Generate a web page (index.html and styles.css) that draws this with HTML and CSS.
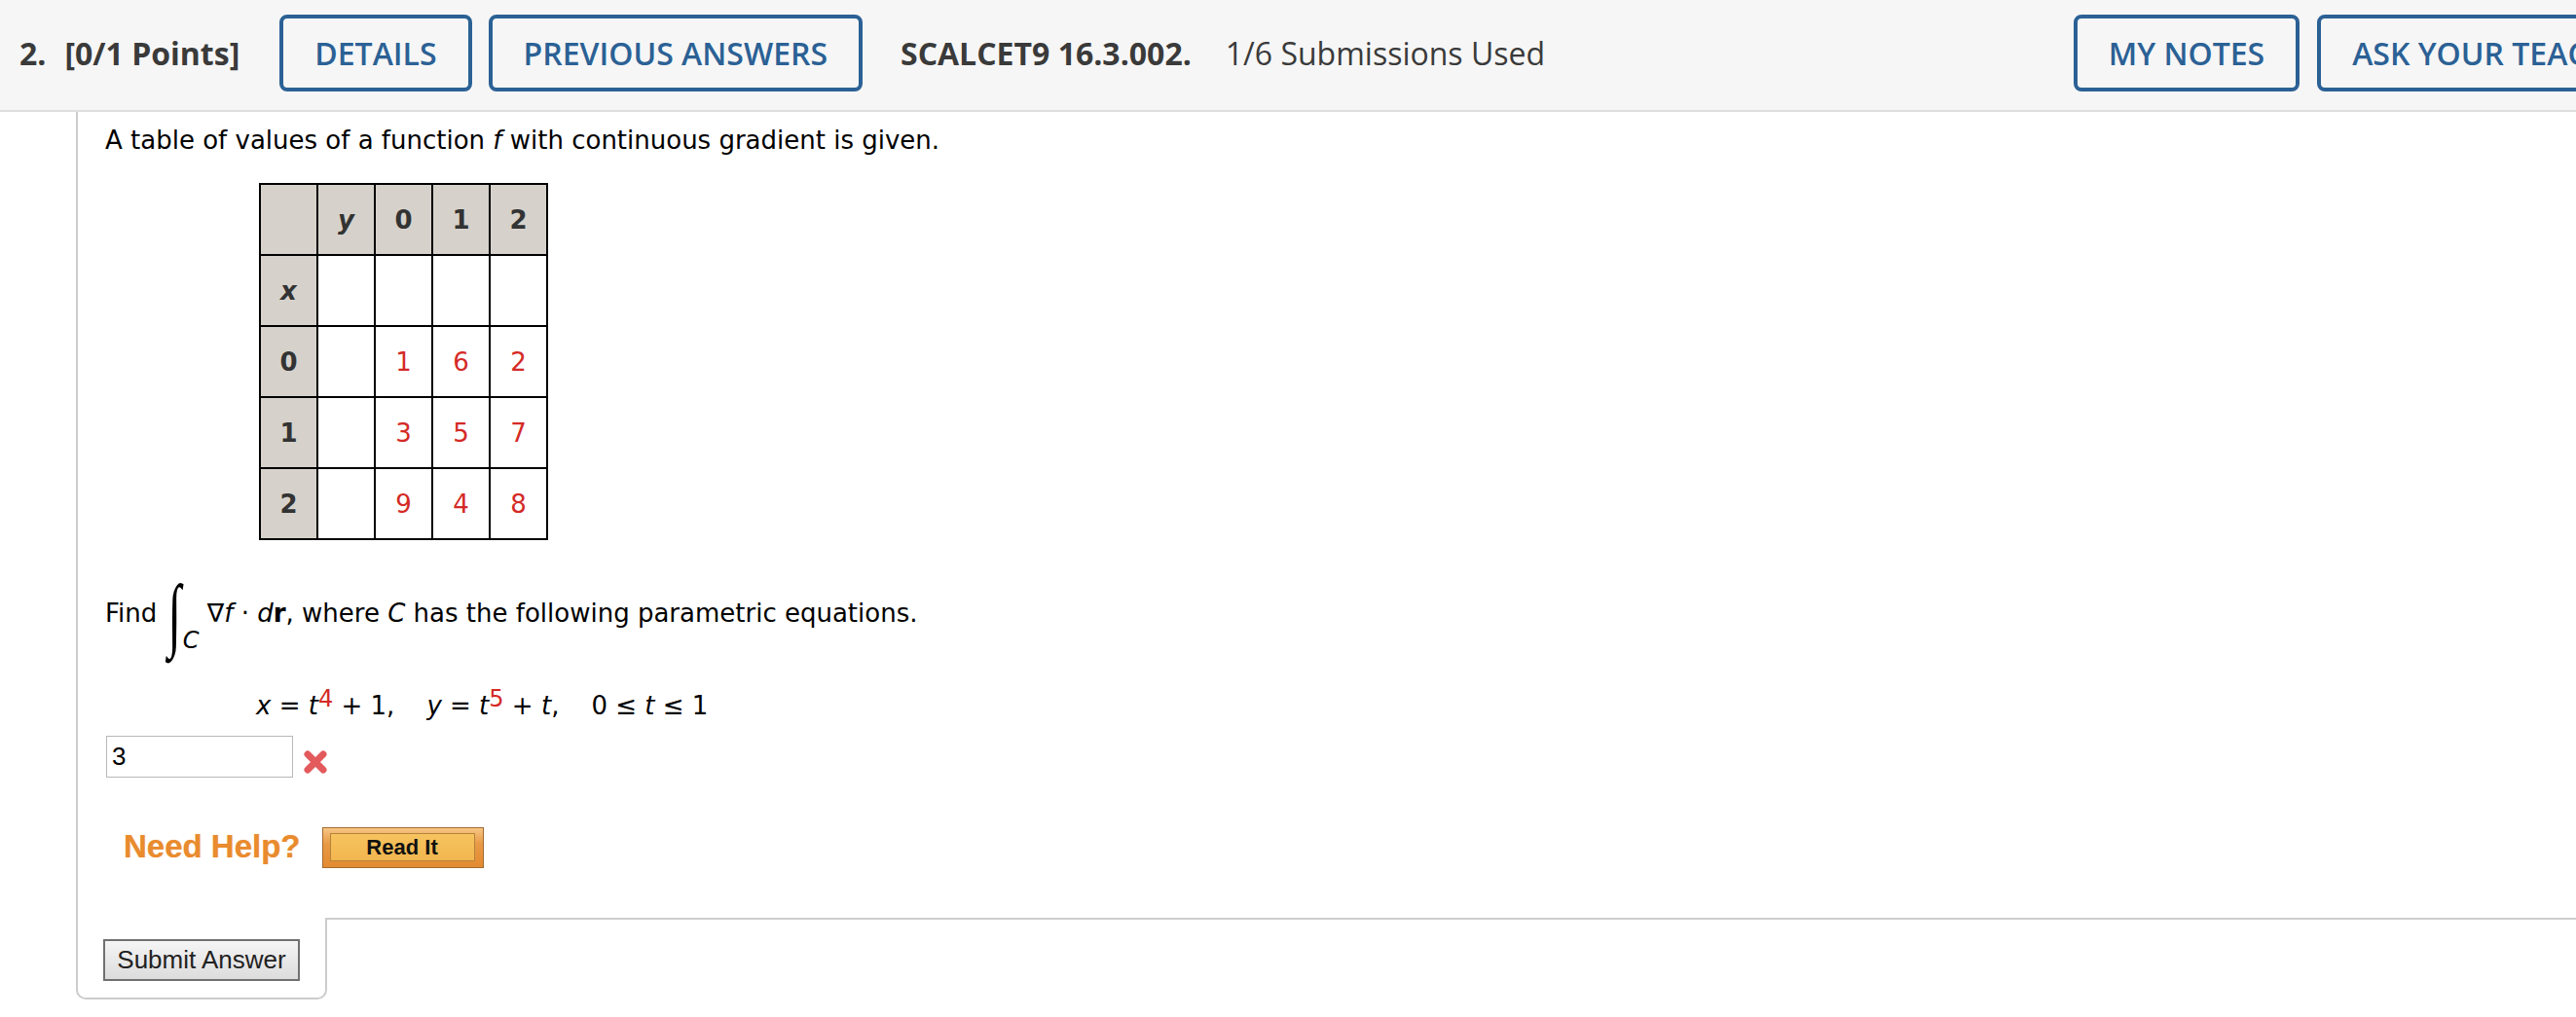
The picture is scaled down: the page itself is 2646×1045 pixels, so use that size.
FILE: index.html
```html
<!DOCTYPE html>
<html lang="en">
<head>
<meta charset="utf-8">
<title>SCALCET9 16.3.002</title>
<link rel="stylesheet" href="styles.css">
</head>
<body>
<header class="qhead">
  <span class="qnum">2.</span>
  <span class="qpts">[0/1 Points]</span>
  <button class="hbtn">DETAILS</button>
  <button class="hbtn">PREVIOUS ANSWERS</button>
  <span class="qref">SCALCET9 16.3.002.</span>
  <span class="qsubs">1/6 Submissions Used</span>
  <div class="hright">
    <button class="hbtn">MY NOTES</button>
    <button class="hbtn">ASK YOUR TEACHER</button>
  </div>
</header>
<main class="question">
  <div class="qbody">
    <p class="intro">A table of values of a function <i>f</i> with continuous gradient is given.</p>
    <table class="vals">
      <tr><th></th><th><i>y</i></th><th>0</th><th>1</th><th>2</th></tr>
      <tr><th><i>x</i></th><td></td><td></td><td></td><td></td></tr>
      <tr><th>0</th><td></td><td class="v">1</td><td class="v">6</td><td class="v">2</td></tr>
      <tr><th>1</th><td></td><td class="v">3</td><td class="v">5</td><td class="v">7</td></tr>
      <tr><th>2</th><td></td><td class="v">9</td><td class="v">4</td><td class="v">8</td></tr>
    </table>
    <p class="find">Find <span class="int"><span class="int-sign">&#8747;</span><i class="int-sub">C</i></span> &#8711;<i>f</i> &#183; <i>d</i><b>r</b>, where <i>C</i> has the following parametric equations.</p>
    <p class="eq"><i>x</i> = <i>t</i><sup class="red">4</sup> + 1,&nbsp;&nbsp;&nbsp; <i>y</i> = <i>t</i><sup class="red">5</sup> + <i>t</i>,&nbsp;&nbsp;&nbsp; 0 &#8804; <i>t</i> &#8804; 1</p>
    <div class="answer">
      <input class="ans" type="text" value="3">
      <svg class="wrong" width="26" height="26" viewBox="0 0 26 26" aria-label="incorrect">
        <path d="M5 5 L21 21 M21 5 L5 21" stroke="#e35a5d" stroke-width="7" stroke-linecap="round" fill="none"/>
      </svg>
    </div>
    <div class="help">
      <span class="help-label">Need Help?</span>
      <button class="readit"><span class="readit-in">Read It</span></button>
    </div>
  </div>
  <div class="submit-row">
    <div class="submit-tab"><button class="submit">Submit Answer</button></div>
    <div class="submit-rest"></div>
  </div>
</main>
</body>
</html>
```
FILE: styles.css
```css
html, body {
  margin: 0;
  padding: 0;
  overflow: hidden;
  background: #ffffff;
}

body {
  font-family: "DejaVu Sans", Verdana, sans-serif;
  font-size: 26px;
  color: #000;
}

/* ---------- header ---------- */
.qhead {
  display: flex;
  align-items: center;
  box-sizing: border-box;
  min-width: 2780px;
  height: 115px;
  padding: 0 24px 4px 20px;
  background: #f6f6f6;
  border-bottom: 2px solid #dedede;
  font-family: "Open Sans", sans-serif;
  font-size: 32px;
  color: #3a3a3a;
}

.qnum {
  font-weight: 700;
  margin-right: 19px;
}

.qpts {
  font-weight: 700;
  margin-right: 41px;
}

.hbtn {
  box-sizing: border-box;
  height: 79px;
  padding: 0 32px;
  margin-right: 17px;
  border: 4px solid #2b6195;
  border-radius: 8px;
  background: transparent;
  color: #2b6195;
  font-family: "Open Sans", sans-serif;
  font-size: 32px;
  font-weight: 600;
  line-height: 44px;
  white-space: nowrap;
}

.qref {
  font-weight: 700;
  margin-left: 22px;
  margin-right: 35px;
}

.qsubs {
  font-weight: 400;
}

.hright {
  margin-left: auto;
  display: flex;
  gap: 18px;
}

.hright .hbtn {
  margin-right: 0;
}

/* ---------- question ---------- */
.question {
  margin-left: 78px;
}

.qbody {
  border-left: 2px solid #cccccc;
  padding: 14px 0 51px 28px;
}

.qbody p {
  margin: 0;
  line-height: 30px;
}

.intro {
  margin-bottom: 29px !important;
}

.vals {
  border-collapse: collapse;
  margin-left: 158px;
  margin-bottom: 39px;
}

.vals th,
.vals td {
  border: 2px solid #000;
  width: 57px;
  height: 71px;
  padding: 0;
  text-align: center;
  vertical-align: middle;
  font-size: 26px;
}

.vals th {
  background: #d6d2cb;
  color: #333;
  font-weight: 700;
}

.vals td {
  background: #fff;
}

.vals .v {
  color: #d42a26;
}

.find {
  margin-bottom: 42px !important;
}

.int {
  display: inline-flex;
  align-items: flex-end;
  vertical-align: middle;
  height: 74px;
  width: 34px;
  margin-left: 1px;
}

.int-sign {
  font-family: "Liberation Serif", serif;
  font-size: 58px;
  line-height: 74px;
  height: 74px;
  width: 20px;
  display: block;
  transform: scale(0.85, 1.45);
  transform-origin: 50% 50%;
  font-weight: 400;
}

.int-sub {
  font-size: 24px;
  line-height: 24px;
  margin-left: -2px;
  margin-bottom: -2px;
}

.eq {
  padding-left: 155px;
}

.red {
  color: #d42a26;
}

.eq sup {
  font-size: 24px;
  line-height: 0;
  vertical-align: 8px;
}

.answer {
  display: flex;
  align-items: center;
  margin-top: 16px;
  margin-left: 1px;
}

.ans {
  box-sizing: border-box;
  width: 192px;
  height: 43px;
  margin: 0;
  border: 1px solid #b8b8b8;
  padding: 0 5px;
  font-family: "Liberation Sans", Arial, sans-serif;
  font-size: 26px;
  color: #000;
  background: #fff;
}

.wrong {
  margin-left: 10px;
  margin-top: 10px;
}

.help {
  display: flex;
  align-items: center;
  margin-top: 51px;
  margin-left: 19px;
}

.help-label {
  font-family: "Liberation Sans", Arial, sans-serif;
  font-size: 33px;
  font-weight: 700;
  color: #e98b2e;
  text-shadow: 0 0 1px rgba(233, 139, 46, 0.6);
  margin-right: 22px;
  margin-top: -2px;
}

.readit {
  box-sizing: border-box;
  width: 166px;
  height: 42px;
  padding: 5px 8px 6px 7px;
  border: 1px solid #a26a2e;
  background: linear-gradient(#f6c684, #e89a45 40%, #e38a30);
  display: flex;
}

.readit-in {
  flex: 1;
  display: block;
  box-sizing: border-box;
  border: 1px solid #b5843c;
  background: linear-gradient(#f6c35f, #f2b64e);
  font-family: "Liberation Sans", Arial, sans-serif;
  font-size: 22px;
  font-weight: 700;
  line-height: 27px;
  color: #111;
  text-align: center;
}

/* ---------- submit ---------- */
.submit-row {
  display: flex;
}

.submit-tab {
  box-sizing: border-box;
  width: 258px;
  padding: 22px 0 17px 26px;
  border: 2px solid #cccccc;
  border-top: none;
  border-radius: 0 0 10px 10px;
}

.submit {
  box-sizing: border-box;
  width: 202px;
  height: 43px;
  margin: 0;
  padding: 0;
  border: 2px solid #707070;
  background: linear-gradient(#f5f5f5, #dcdcdc);
  font-family: "Liberation Sans", Arial, sans-serif;
  font-size: 26px;
  color: #222;
}

.submit-rest {
  flex: 1;
  border-top: 2px solid #cccccc;
}
```
